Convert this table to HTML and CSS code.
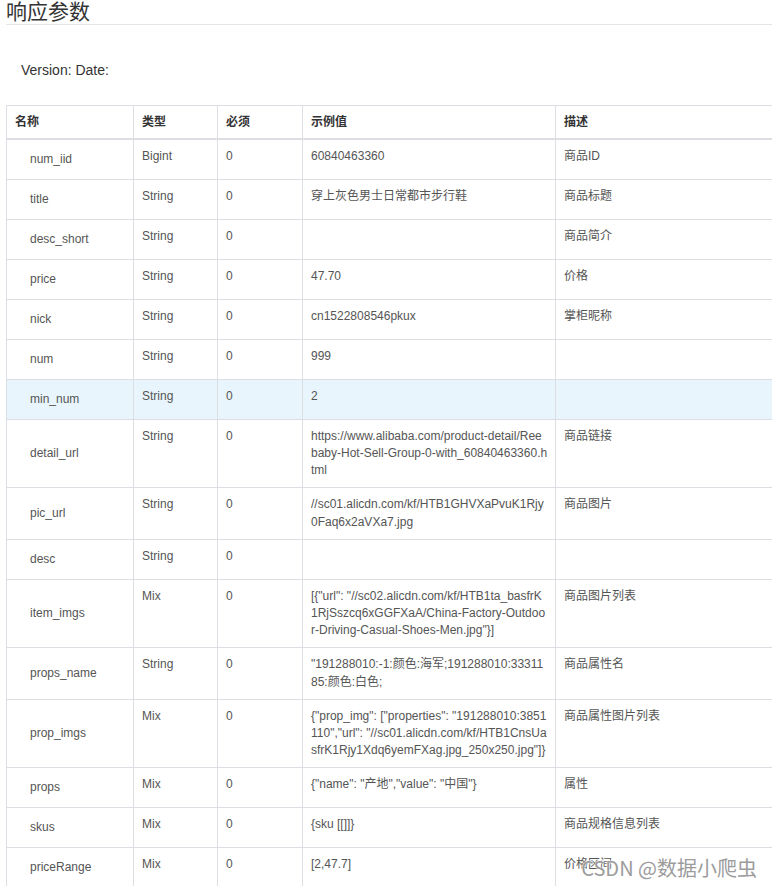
FILE: index.html
```html
<!DOCTYPE html>
<html lang="zh-CN">
<head>
<meta charset="utf-8">
<title>响应参数</title>
<link rel="stylesheet" href="styles.css">
</head>
<body>
<div class="page">
  <h2 class="section-title">响应参数</h2>
  <p class="version">Version: Date:</p>
  <div class="table-wrap">
    <table class="params">
      <colgroup>
        <col class="c-name">
        <col class="c-type">
        <col class="c-req">
        <col class="c-example">
        <col class="c-desc">
      </colgroup>
      <thead>
        <tr><th>名称</th><th>类型</th><th>必须</th><th>示例值</th><th>描述</th></tr>
      </thead>
      <tbody>
        <tr><td class="name">num_iid</td><td>Bigint</td><td>0</td><td class="ex">60840463360</td><td>商品ID</td></tr>
        <tr><td class="name">title</td><td>String</td><td>0</td><td class="ex">穿上灰色男士日常都市步行鞋</td><td>商品标题</td></tr>
        <tr><td class="name">desc_short</td><td>String</td><td>0</td><td class="ex"></td><td>商品简介</td></tr>
        <tr><td class="name">price</td><td>String</td><td>0</td><td class="ex">47.70</td><td>价格</td></tr>
        <tr><td class="name">nick</td><td>String</td><td>0</td><td class="ex">cn1522808546pkux</td><td>掌柜昵称</td></tr>
        <tr><td class="name">num</td><td>String</td><td>0</td><td class="ex">999</td><td></td></tr>
        <tr class="hl"><td class="name">min_num</td><td>String</td><td>0</td><td class="ex">2</td><td></td></tr>
        <tr><td class="name">detail_url</td><td>String</td><td>0</td><td class="ex">https://www.alibaba.com/product-detail/Reebaby-Hot-Sell-Group-0-with_60840463360.html</td><td>商品链接</td></tr>
        <tr><td class="name">pic_url</td><td>String</td><td>0</td><td class="ex">//sc01.alicdn.com/kf/HTB1GHVXaPvuK1Rjy0Faq6x2aVXa7.jpg</td><td>商品图片</td></tr>
        <tr><td class="name">desc</td><td>String</td><td>0</td><td class="ex"></td><td></td></tr>
        <tr><td class="name">item_imgs</td><td>Mix</td><td>0</td><td class="ex">[{"url": "//sc02.alicdn.com/kf/HTB1ta_basfrK1RjSszcq6xGGFXaA/China-Factory-Outdoor-Driving-Casual-Shoes-Men.jpg"}]</td><td>商品图片列表</td></tr>
        <tr><td class="name">props_name</td><td>String</td><td>0</td><td class="ex">"191288010:-1:颜色:海军;191288010:3331185:颜色:白色;</td><td>商品属性名</td></tr>
        <tr><td class="name">prop_imgs</td><td>Mix</td><td>0</td><td class="ex">{"prop_img": ["properties": "191288010:3851110","url": "//sc01.alicdn.com/kf/HTB1CnsUasfrK1Rjy1Xdq6yemFXag.jpg_250x250.jpg"]}</td><td>商品属性图片列表</td></tr>
        <tr><td class="name">props</td><td>Mix</td><td>0</td><td class="ex">{"name": "产地","value": "中国"}</td><td>属性</td></tr>
        <tr><td class="name">skus</td><td>Mix</td><td>0</td><td class="ex">{sku [[]]}</td><td>商品规格信息列表</td></tr>
        <tr><td class="name">priceRange</td><td>Mix</td><td>0</td><td class="ex">[2,47.7]</td><td>价格区间</td></tr>
      </tbody>
    </table>
  </div>
</div>
<div class="watermark">CSDN @数据小爬虫</div>
</body>
</html>
```
FILE: styles.css
```css
html, body {
  margin: 0;
  padding: 0;
  overflow: hidden;
  background: #fff;
}
body {
  font-family: "Liberation Sans", "Noto Sans CJK SC", sans-serif;
  color: #555;
}
.page {
  padding-left: 6px;
}
.section-title {
  margin: 0;
  font-family: "Noto Sans CJK SC", "Liberation Sans", sans-serif;
  font-size: 21px;
  font-weight: normal;
  line-height: 20px;
  height: 20px;
  padding-bottom: 4px;
  color: #333;
  border-bottom: 1px solid #e5e5e5;
}
.version {
  margin: 35px 0 0 0;
  padding-left: 15px;
  font-size: 14px;
  line-height: 20px;
  color: #333;
}
.table-wrap {
  margin-top: 25px;
  overflow: hidden;
}
.params {
  border-collapse: collapse;
  table-layout: fixed;
  width: 800px;
  font-size: 12px;
  line-height: 17.2px;
}
.c-name { width: 127px; }
.c-type { width: 84px; }
.c-req { width: 85px; }
.c-example { width: 253px; }
.c-desc { width: 251px; }
.params th,
.params td {
  border: 1px solid #dcdee3;
  padding: 8px;
  text-align: left;
  vertical-align: top;
  word-break: break-all;
}
.params th {
  color: #333;
  font-weight: bold;
  padding-bottom: 7px;
  border-bottom: 2px solid #dcdee3;
}
.params tbody tr {
  height: 40px;
}
.params td.name {
  vertical-align: middle;
  padding-left: 23px;
}
.params td.ex {
  padding-right: 7px;
}
.params tr.hl td {
  background: #e9f5fc;
}
.watermark {
  position: absolute;
  right: 15px;
  bottom: 6px;
  font-family: "Noto Sans CJK SC", "Liberation Sans", sans-serif;
  font-size: 20px;
  line-height: 24px;
  color: #9c9c9c;
  text-shadow: 0 0 2px #fff, 0 0 2px #fff;
}
```
